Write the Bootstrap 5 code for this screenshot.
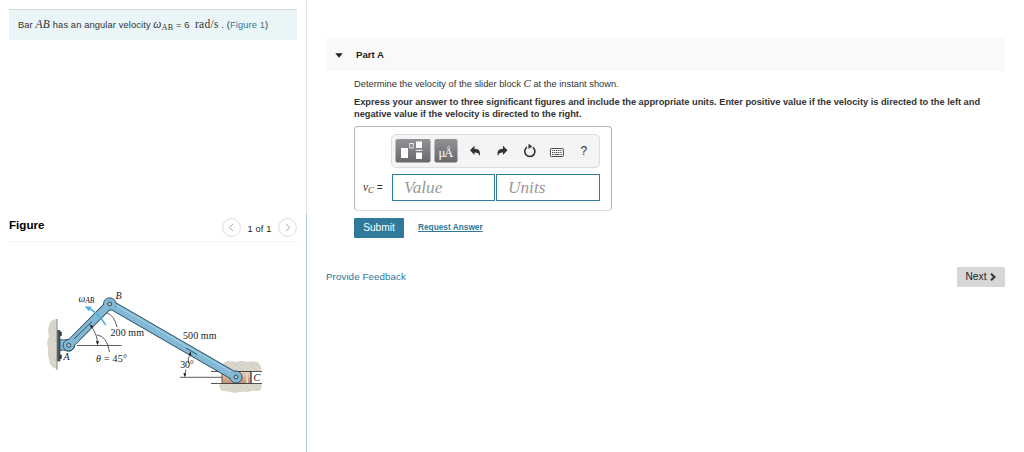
<!DOCTYPE html>
<html lang="en">
<head>
<meta charset="utf-8">
<meta name="viewport" content="width=device-width, initial-scale=1">
<title>Part A</title>
<link href="https://cdn.jsdelivr.net/npm/bootstrap@5.3.0/dist/css/bootstrap.min.css" rel="stylesheet">
<style>
body{font-family:"Liberation Sans",Arial,sans-serif;font-size:9.3px;line-height:11.5px;color:#333;background:#fff;height:452px;overflow:hidden}
a{color:#2f7899;text-decoration:none}
.math{font-family:"Liberation Serif","Times New Roman",serif;line-height:1}
.side{width:307px;height:452px;padding:9px 9px 0;border-right:1px solid #b4c9d8;border-image:linear-gradient(#dde5ee 214px,#b0c8d8 214px) 1}
.intro{height:31px;background:#eaf5f8;border-top:1px solid #d5dcdb;padding:1px 0 0 9px;white-space:pre;letter-spacing:.12px}
.intro .math{font-size:11.5px;letter-spacing:.25px}
.intro .sub{font-size:8px}
.fighead{margin-top:172px;height:30px;border-bottom:1px solid #f3f3f3}
.figtitle{font-size:11.6px;line-height:14px;color:#000;padding-top:6px}
.pager{padding-top:6px;height:25px;color:#222}
.pager span{width:37px;text-align:center;padding-top:4px;letter-spacing:.1px}
.pager svg{width:19px;height:19px}
.main{padding:38px 19px 0 19px}
.parthead{height:33px;background:#f9f9f9;padding:1px 0 0 9px;font-size:9.6px;color:#222}
.parthead svg{width:8px;height:5px;margin-right:13px}
.partbody{padding-left:28px}
.question{margin-top:7px;height:12px;white-space:nowrap}
.question .math{font-size:11px}
.instruct{margin-top:7px;white-space:nowrap;letter-spacing:-.025px}
.answer{width:258px;height:85px;margin-top:6px;border:1px solid #b5b5b5;border-bottom-color:#ddd;border-radius:4px;padding:7px 11px 0 8px}
.tools{width:209px;height:34px;margin-left:28px;border:1px solid #ddd;border-radius:5px;background:#f4f4f4}
.tools svg{display:block}
.fields{margin-top:6px}
.lab{width:29px;font-size:10px;white-space:nowrap}
.lab .math{font-size:11.5px}
.inp{height:27px;border:1px solid #2f7ea3;border-radius:0;padding:0 0 0 11px;font-family:"Liberation Serif",serif;font-style:italic;font-size:17.3px;background:#fff}
.inp::placeholder{color:#999;opacity:1}
.val{width:103px}.uni{width:104px;margin-left:1px}
.acts{margin-top:7px}
.submit{width:50px;height:20px;padding:0;border:0;border-radius:1px;background:#31799a;color:#fff;font-size:10.2px;line-height:20px}
.req{font-size:8.3px;text-decoration:underline;margin-left:14px}
.foot{margin-top:29px}
.next{width:48px;height:20px;padding:0;border:0;border-radius:1px;background:#d6d6d6;color:#222;font-size:10.2px;line-height:20px}
.feed{font-size:9.8px;letter-spacing:.06px}
.diagram{display:block;width:230px;height:115px;margin:43px 0 0 31px}
</style>
</head>
<body>
<div class="d-flex">
<aside class="side flex-shrink-0">
  <div class="intro d-flex align-items-center"><div>Bar <i class="math">AB</i> has an angular velocity <span class="math"><i>ω</i><sub class="sub">AB</sub></span> = 6  <span class="math">rad/s</span> . (<a href="#">Figure 1</a>)</div></div>
  <div class="fighead d-flex justify-content-between">
    <h2 class="figtitle fw-bold m-0">Figure</h2>
    <div class="pager d-flex align-items-center">
      <svg viewBox="0 0 19 19" fill="none"><circle cx="9.5" cy="9.500" r="8.900" stroke="#ddd"/><path d="M11.200 5.800 7.300 9.500l3.900 3.700" stroke="#aaa"/></svg>
      <span>1 of 1</span>
      <svg viewBox="0 0 19 19" fill="none"><circle cx="9.500" cy="9.500" r="8.900" stroke="#ddd"/><path d="m7.800 5.800 3.900 3.700-3.900 3.700" stroke="#aaa"/></svg>
    </div>
  </div>
  <svg class="diagram" viewBox="40 285 230 115" font-family="Liberation Serif, serif" font-size="10" fill="#222">
    <defs>
      <pattern id="grit" width="7" height="6" patternUnits="userSpaceOnUse"><rect width="7" height="6" fill="#d9d7cc"/><circle cx="2" cy="2" r=".6" fill="#c2c0b4"/><circle cx="5" cy="5" r=".7" fill="#cac8bc"/></pattern>
      <linearGradient id="blk" x2="0" y2="1"><stop stop-color="#ecd2bd"/><stop offset="1" stop-color="#c28e70"/></linearGradient>
    </defs>
    <path d="M57 319Q49 320 49 326Q47 331 49 336Q46 342 48 348Q47 354 49 359Q49 367 57 369Z" fill="url(#grit)"/>
    <path d="M57 319V370" stroke="#888"/>
    <path d="M57.700 330.500h2.300v30.500h-2.300zM60 332h1.400v3.500H60zM60 355h1.400v3.500H60z" fill="#4f616b" stroke="#222" stroke-width=".6"/>
    <path d="M60 339.500Q64 340.500 67 339.500A6 6 0 1 1 67 351Q63 349.500 60 350.500Z" fill="#83b8d3" stroke="#29434f" stroke-width=".8"/>
    <path d="M222 371Q221 364 225 362Q230 360 235 362Q242 360 247 362Q254 360 259 363Q262 367 261 371Z M220 383H261Q263 388 259 391Q252 390 248 392Q240 391 235 393Q228 391 222 391Q218 387 220 383Z" fill="url(#grit)"/>
    <rect x="222" y="371.500" width="29" height="12" fill="url(#blk)" stroke="#5b4438" stroke-width=".9"/>
    <path d="M247 372v11" stroke="#e9d1bf" stroke-width="2"/>
    <path d="M211 371.500h51M211 383.500h51M251 371.500v12" stroke="#444" stroke-width=".9"/>
    <path d="M109.700 304 236 377M68.700 345.300l41-41.300" stroke="#294b5c" stroke-width="9"/>
    <path d="M109.700 304 236 377M68.700 345.300l41-41.300" stroke="#82b9d6" stroke-width="7.400"/>
    <path d="M112 303 234 373.500" stroke="#a3cee2" stroke-width="1.200"/>
    <g fill="#82b9d6" stroke="#294b5c" stroke-width=".9"><circle cx="68.700" cy="345.300" r="5.600"/><circle cx="109.700" cy="304" r="6.200"/><circle cx="236" cy="377" r="6"/></g>
    <path d="M69.500 344.500 76 338M109.700 304 115 307.100M109.700 304 104.500 309.300M236 377 229.500 373.200" stroke="#82b9d6" stroke-width="7.200"/>
    <g fill="#b6c2c8" stroke="#273f4b" stroke-width=".9"><circle cx="68.700" cy="345.300" r="2"/><circle cx="109.700" cy="304" r="1.900"/><circle cx="236" cy="377" r="2"/></g>
    <path d="M74 339 92 321.500M186 348l11 6.500" stroke="#222" stroke-width=".7"/>
    <g fill="none" stroke="#333" stroke-width=".8"><path d="M77 345.500h44.500M90.500 325.500Q97.500 334 97.500 344M97 335Q107 336 109.500 352M107 313Q114 315 117 327M180 377.300h42M190.500 353.500Q187 359 188.500 363M186 369.500Q185 372 185 376"/></g>
    <path d="m89.500 324.200 4 2.300-2.200 1.700ZM97.500 345.300l-1.600-4h3.200ZM190.800 351.500l.6 4.600-2.900-1.500ZM184.800 377.200l-1.500-4h3Z" fill="#222"/>
    <path d="M105.800 325Q98 313 88.500 308" fill="none" stroke="#4eafe2" stroke-width="1.500"/><path d="m84.700 306.200 7 .6-3 4.500Z" fill="#4eafe2"/>
    <text x="78.500" y="301.500" font-style="italic" font-size="9.500">ω<tspan font-size="7.500" dy="1.700">AB</tspan></text>
    <text x="115.500" y="299" font-style="italic">B</text>
    <text x="63.500" y="360" font-style="italic">A</text>
    <text x="253.500" y="381" font-style="italic">C</text>
    <text x="110.500" y="336" textLength="33.500">200 mm</text>
    <text x="183" y="339.300" textLength="33.500">500 mm</text>
    <text x="96" y="361.500" textLength="31"><tspan font-style="italic">θ</tspan> = 45°</text>
    <text x="180.300" y="367.500" textLength="13.500">30°</text>
  </svg>
</aside>
<main class="main flex-grow-1">
  <div class="parthead d-flex align-items-center fw-bold"><svg viewBox="0 0 8 5"><path d="M.3.3h7.400L4 4.700z" fill="#222"/></svg><span>Part A</span></div>
  <div class="partbody">
    <div class="question">Determine the velocity of the slider block <i class="math">C</i> at the instant shown.</div>
    <div class="instruct fw-bold">Express your answer to three significant figures and include the appropriate units. Enter positive value if the velocity is directed to the left and<br>negative value if the velocity is directed to the right.</div>
    <div class="answer">
      <div class="tools">
        <svg width="207" height="32" viewBox="392 135 207 32">
          <defs><linearGradient id="g" x2="0" y2="1"><stop stop-color="#929297"/><stop offset="1" stop-color="#68686c"/></linearGradient></defs>
          <rect x="395.500" y="139" width="35" height="23.500" rx="2" fill="url(#g)"/><rect x="434.500" y="139" width="23" height="23.500" rx="2" fill="url(#g)"/>
          <path d="M401 148h7v10h-7zM416 141.500h6v6.500h-6zM416 152.500h6v6.500h-6zM415.500 149.700h7v1h-7z" fill="#fff"/><rect x="409.800" y="143.500" width="3.400" height="4.500" fill="none" stroke="#fff" stroke-width=".8"/>
          <text x="438.500" y="157" font-family="Liberation Serif,serif" font-size="13" fill="#fff" textLength="15">μÅ</text>
          <path d="M470 150.300l4.500-4.500v2.900c4.500 0 6.500 2.800 5 7.300-.6-2.500-2-3.600-5-3.500v2.600z" fill="#333"/>
          <path d="M507.500 150.300l-4.500-4.500v2.900c-4.500 0-6.500 2.800-5 7.300.6-2.500 2-3.600 5-3.500v2.600z" fill="#333"/>
          <path d="M527 147.200A5.100 5.100 0 1 0 532.800 147.300" fill="none" stroke="#333" stroke-width="1.600"/><path d="M528.500 143.700l3.800 2.800-3.800 2.500z" fill="#333"/>
          <rect x="550.400" y="148.500" width="13" height="8" rx="1" fill="#fff" stroke="#333" stroke-width=".9"/><path d="M552 150.500h10M552 152.500h10" stroke="#444" stroke-dasharray="1.200 .7"/><path d="M552 154.600h1.500m1 0h5m1 0h1.500" stroke="#444"/>
          <text x="580.500" y="155" font-size="12" fill="#333">?</text>
        </svg>
      </div>
      <div class="fields d-flex align-items-center">
        <label class="lab" for="v"><i class="math">v<sub>C</sub></i> =</label>
        <input id="v" class="inp val" placeholder="Value"><input class="inp uni" placeholder="Units" aria-label="Units">
      </div>
    </div>
    <div class="acts d-flex align-items-center"><button class="submit btn">Submit</button><a class="req fw-bold" href="#">Request Answer</a></div>
  </div>
  <div class="foot d-flex align-items-center justify-content-between"><a class="feed" href="#">Provide Feedback</a>
    <button class="next btn d-flex align-items-center justify-content-center">Next<svg class="ms-1" width="6" height="8" viewBox="0 0 6 8"><path d="m1 .8 3.500 3.200L1 7.200" fill="none" stroke="#333" stroke-width="2"/></svg></button></div>
</main>
</div>
<script src="https://cdn.jsdelivr.net/npm/bootstrap@5.3.0/dist/js/bootstrap.bundle.min.js"></script>
</body>
</html>
